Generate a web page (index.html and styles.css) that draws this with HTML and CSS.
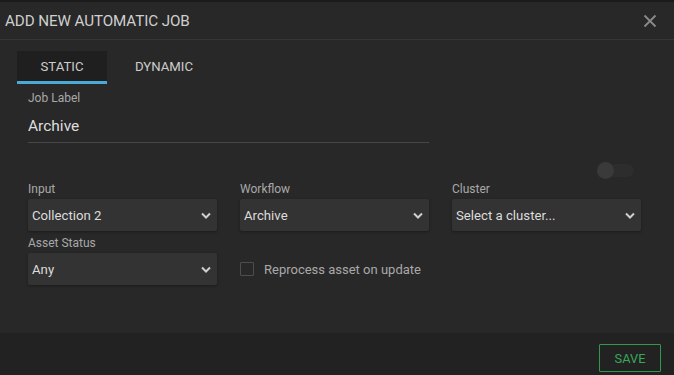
FILE: index.html
```html
<!DOCTYPE html>
<html>
<head>
<meta charset="utf-8">
<link rel="stylesheet" href="styles.css">
</head>
<body>
<div class="dialog">
  <div class="header">
    <div class="title">ADD NEW AUTOMATIC JOB</div>
    <svg class="close" width="14" height="14" viewBox="0 0 14 14"><path d="M1.5 1.5L12.5 12.5M12.5 1.5L1.5 12.5" stroke="#8a8a8a" stroke-width="1.8"/></svg>
  </div>
  <div class="content">
    <div class="tabs">
      <div class="tab active">STATIC</div>
      <div class="tab">DYNAMIC</div>
    </div>
    <div class="jobfield">
      <div class="label">Job Label</div>
      <div class="textinput">Archive</div>
    </div>
    <div class="toggle-row">
      <div class="toggle"><div class="track"></div><div class="knob"></div></div>
    </div>
    <div class="grid">
      <div class="field">
        <div class="label">Input</div>
        <div class="select"><span>Collection 2</span><svg class="chev" width="10" height="7" viewBox="0 0 10 7"><path d="M1 1.5L5 5.5L9 1.5" stroke="#cfcfcf" stroke-width="2" fill="none"/></svg></div>
      </div>
      <div class="field">
        <div class="label">Workflow</div>
        <div class="select"><span>Archive</span><svg class="chev" width="10" height="7" viewBox="0 0 10 7"><path d="M1 1.5L5 5.5L9 1.5" stroke="#cfcfcf" stroke-width="2" fill="none"/></svg></div>
      </div>
      <div class="field">
        <div class="label">Cluster</div>
        <div class="select"><span>Select a cluster...</span><svg class="chev" width="10" height="7" viewBox="0 0 10 7"><path d="M1 1.5L5 5.5L9 1.5" stroke="#cfcfcf" stroke-width="2" fill="none"/></svg></div>
      </div>
      <div class="field">
        <div class="label">Asset Status</div>
        <div class="select"><span>Any</span><svg class="chev" width="10" height="7" viewBox="0 0 10 7"><path d="M1 1.5L5 5.5L9 1.5" stroke="#cfcfcf" stroke-width="2" fill="none"/></svg></div>
      </div>
      <div class="field checkfield">
        <div class="checkbox"></div>
        <div class="checklabel">Reprocess asset on update</div>
      </div>
    </div>
  </div>
  <div class="footer">
    <div class="save">SAVE</div>
  </div>
</div>
</body>
</html>
```
FILE: styles.css
```css
html, body {
  margin: 0;
  padding: 0;
  background: #1b1b1b;
}
body {
  width: 674px;
  height: 375px;
  overflow: hidden;
  font-family: Roboto, "Liberation Sans", sans-serif;
}
.dialog {
  margin-top: 2px;
  height: 373px;
  background: #282828;
  display: flex;
  flex-direction: column;
}
.header {
  height: 38px;
  border-bottom: 1px solid #353535;
  display: flex;
  align-items: center;
  justify-content: space-between;
  padding: 0 17px 0 5px;
  box-sizing: border-box;
  flex: none;
}
.title {
  color: #cfcfcf;
  font-size: 15.2px;
  letter-spacing: -0.1px;
  margin-top: 1px;
}
.content {
  flex: 1;
  padding: 11px 0 0 0;
}
.tabs {
  display: flex;
  padding-left: 17px;
  height: 33px;
}
.tab {
  width: 90px;
  box-sizing: border-box;
  display: flex;
  align-items: center;
  justify-content: center;
  color: #cdcdcd;
  font-size: 13.2px;
  padding-bottom: 2px;
}
.tab.active {
  background: #1f1f1f;
  border-bottom: 3px solid #4ba9d6;
  padding-bottom: 0;
}
.tab + .tab {
  width: 114px;
}
.jobfield {
  margin-left: 28px;
  width: 401px;
  padding-top: 7px;
}
.label {
  color: #a8a8a8;
  font-size: 12px;
  line-height: 14px;
}
.textinput {
  color: #dedede;
  font-size: 15.5px;
  height: 35px;
  line-height: 30px;
  padding-top: 3px;
  box-sizing: border-box;
  border-bottom: 1px solid #474747;
  margin-top: 3px;
}
.toggle-row {
  display: flex;
  justify-content: flex-end;
  padding-right: 40px;
  margin-top: 19px;
  height: 17px;
}
.toggle {
  position: relative;
  width: 37px;
  height: 17px;
}
.track {
  position: absolute;
  left: 10px;
  top: 2px;
  width: 27px;
  height: 13px;
  border-radius: 7px;
  background: #2d2d2d;
}
.knob {
  position: absolute;
  left: 0;
  top: 0;
  width: 17px;
  height: 17px;
  border-radius: 50%;
  background: #3a3a3a;
}
.grid {
  display: grid;
  grid-template-columns: 189px 189px 189px;
  column-gap: 23px;
  row-gap: 5px;
  margin-left: 28px;
  margin-top: 3px;
}
.field .label {
  margin-bottom: 3px;
}
.select {
  height: 32px;
  background: #333333;
  border-radius: 2px;
  display: flex;
  align-items: center;
  justify-content: space-between;
  padding: 0 6px 0 4px;
  color: #dcdcdc;
  font-size: 13.2px;
  box-shadow: 0 1px 3px rgba(0,0,0,0.35);
}
.chev {
  display: block;
}
.checkfield {
  display: flex;
  align-items: center;
  align-self: end;
  height: 32px;
}
.checkbox {
  width: 12px;
  height: 12px;
  border: 1px solid #4e4e4e;
  border-radius: 1px;
  margin-right: 10px;
}
.checklabel {
  color: #a9a9a9;
  font-size: 13px;
}
.footer {
  height: 42px;
  background: #222222;
  display: flex;
  justify-content: flex-end;
  align-items: flex-start;
  padding: 11px 13px 0 0;
  box-sizing: border-box;
  flex: none;
}
.save {
  width: 62px;
  height: 28px;
  box-sizing: border-box;
  border: 1px solid #2f9a4e;
  border-radius: 1px;
  color: #38a85a;
  font-size: 12.8px;
  display: flex;
  align-items: center;
  justify-content: center;
}
```
